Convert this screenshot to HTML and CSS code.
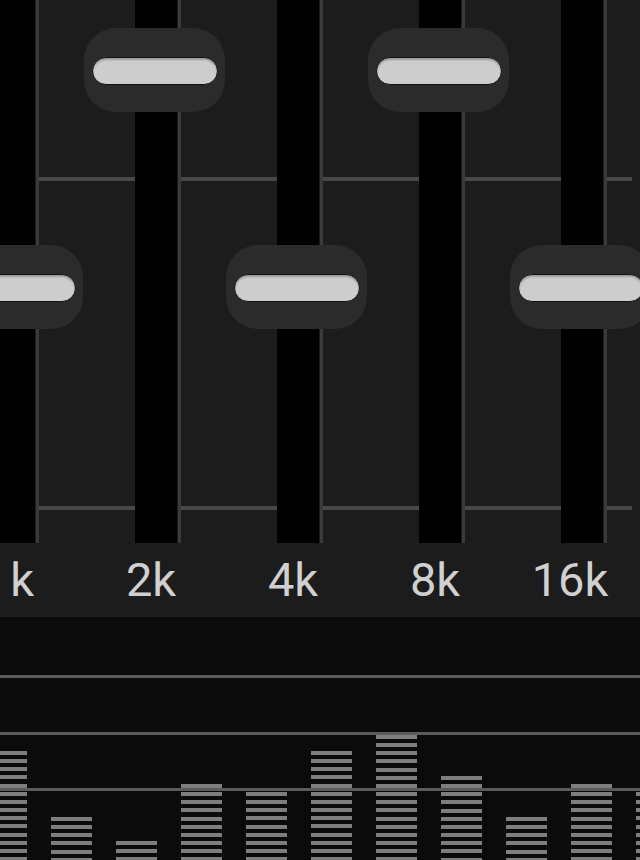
FILE: index.html
```html
<!DOCTYPE html>
<html lang="en">
<head>
  <meta charset="UTF-8" />
  <meta name="viewport" content="width=device-width, initial-scale=1.0"/>
  <title>Equalizer</title>
  <link rel="stylesheet" href="styles.css">
</head>
<body>

  <div class="eq">
    <div class="eq-grid">
      <div class="band">
        <div class="track"><div class="knob knob-low"><div class="pill"></div></div></div>
        <div class="divider"></div>
        <div class="cell"><div class="hline"></div><div class="hline"></div></div>
      </div>
      <div class="band">
        <div class="track"><div class="knob knob-high"><div class="pill"></div></div></div>
        <div class="divider"></div>
        <div class="cell"><div class="hline"></div><div class="hline"></div></div>
      </div>
      <div class="band">
        <div class="track"><div class="knob knob-low"><div class="pill"></div></div></div>
        <div class="divider"></div>
        <div class="cell"><div class="hline"></div><div class="hline"></div></div>
      </div>
      <div class="band">
        <div class="track"><div class="knob knob-high"><div class="pill"></div></div></div>
        <div class="divider"></div>
        <div class="cell"><div class="hline"></div><div class="hline"></div></div>
      </div>
      <div class="band">
        <div class="track"><div class="knob knob-low"><div class="pill"></div></div></div>
        <div class="divider"></div>
        <div class="cell cell-end"><div class="hline"></div><div class="hline"></div></div>
      </div>
    </div>

    <div class="eq-labels">
      <div class="label label-first">1k</div>
      <div class="label">2k</div>
      <div class="label">4k</div>
      <div class="label">8k</div>
      <div class="label label-wide">16k</div>
    </div>
  </div>

  <!-- spectrum -->
  <div class="spectrum">
    <div class="bars">
      <div class="bar" style="height: 114.24px"></div>
      <div class="bar" style="height: 48.96px"></div>
      <div class="bar" style="height: 24.48px"></div>
      <div class="bar" style="height: 81.6px"></div>
      <div class="bar" style="height: 73.44px"></div>
      <div class="bar" style="height: 114.24px"></div>
      <div class="bar" style="height: 130.56px"></div>
      <div class="bar" style="height: 89.76px"></div>
      <div class="bar" style="height: 48.96px"></div>
      <div class="bar" style="height: 81.6px"></div>
      <div class="bar" style="height: 73.44px"></div>
    </div>
  </div>

</body>
</html>
```

FILE: styles.css
```css
body {
  margin: 0;
  width: 640px;
  height: 860px;
  overflow: hidden;
  font-family: Roboto, 'Noto Sans', sans-serif;
  background: #0b0b0b;
}

.eq {
  background: #1c1c1c;
  height: 617px;
}
.eq-grid {
  display: flex;
  height: 543px;
  margin-left: -7px;
}
.band {
  display: flex;
  flex: none;
}
.track {
  position: relative;
  width: 42px;
  background: #000;
}
.divider {
  width: 3px;
  margin-left: 1px;
  background: #3b3b3b;
}
.cell {
  width: 96px;
  padding-top: 177px;
}
.cell-end {
  width: 25px;
}
.hline {
  height: 4px;
  background: #474747;
  margin-bottom: 325px;
}

/* knobs */
.knob {
  position: absolute;
  left: -51px;
  width: 141px;
  height: 84px;
  border-radius: 32px;
  background: #2b2b2b;
  display: flex;
  align-items: center;
  justify-content: center;
}
.knob-high { top: 28px; }
.knob-low { top: 245px; }
.pill {
  box-sizing: border-box;
  width: 126px;
  height: 28px;
  margin: 2px 0 0 1px;
  border-radius: 14px;
  background: #cdcdcd;
  border: 1.5px solid #121212;
  box-shadow: inset 0 2px 2px rgba(0,0,0,0.25);
}

/* labels, the row is clipped where the list scrolls off */
.eq-labels {
  display: flex;
  gap: 62px;
  margin-left: 10px;
  padding-top: 9px;
  overflow: hidden;
}
.label {
  flex: none;
  width: 80px;
  text-align: center;
  white-space: nowrap;
  font-size: 47px;
  color: #d0d0d0;
}
.label-first {
  margin-left: -41px;
}
.label-wide {
  margin-left: -7px;
}

.spectrum {
  height: 243px;
  overflow: hidden;
  background:
    linear-gradient(#5b5b5b, #5b5b5b) 0 58px / 100% 3px no-repeat,
    linear-gradient(#5b5b5b, #5b5b5b) 0 115px / 100% 3px no-repeat,
    linear-gradient(#5b5b5b, #5b5b5b) 0 171px / 100% 3px no-repeat,
    #0b0b0b;
}
.bars {
  display: flex;
  align-items: flex-end;
  gap: 24px;
  height: 130.56px;
  margin: 118px 0 0 -14px;
}
.bar {
  flex: none;
  width: 41px;
  background: repeating-linear-gradient(to bottom, #7e7e7e 0 4px, transparent 4px 8.16px);
}
```
